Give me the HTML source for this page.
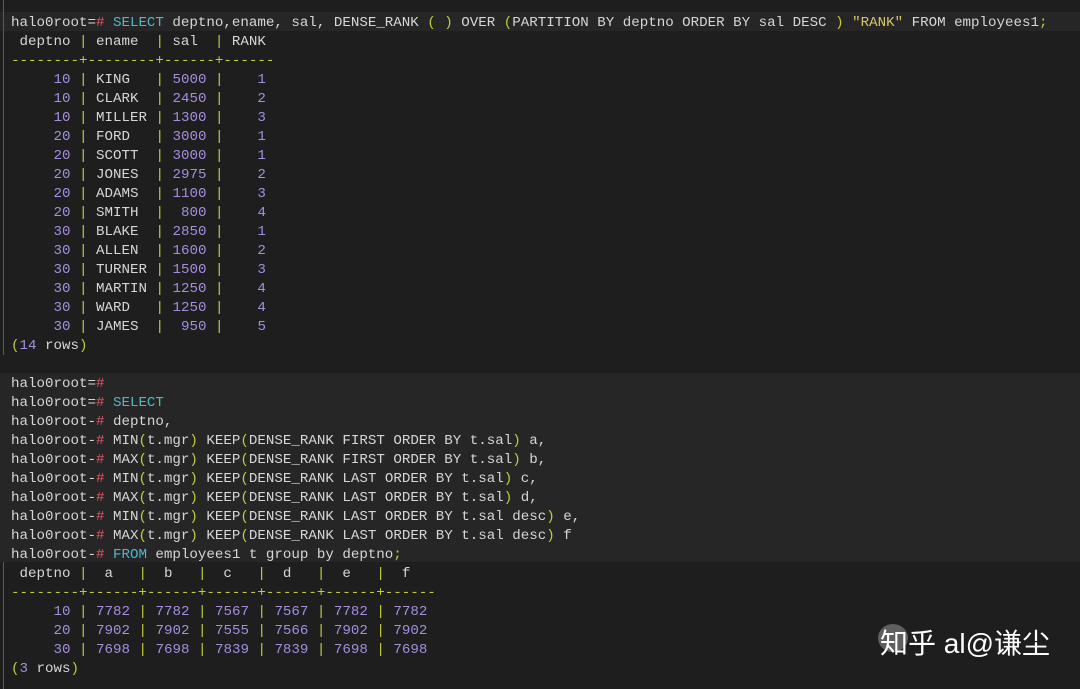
<!DOCTYPE html>
<html><head><meta charset="utf-8"><style>
html,body{margin:0;padding:0;}
body{width:1080px;height:689px;background:#1e1e1e;position:relative;overflow:hidden;}
.band{position:absolute;left:0;width:1080px;background:#262626;}
.vl{position:absolute;left:3px;width:1px;background:#5a5a5a;}
pre{position:absolute;left:11px;top:14px;margin:0;font-family:"Liberation Mono",monospace;font-size:14.17px;line-height:19px;color:#d6d6d6;}
.p{color:#e5535f}.k{color:#4fb8c9}.n{color:#a58ee0}.y{color:#c3cc3a}.s{color:#d8c468}
.wm{position:absolute;left:880px;top:622px;font-family:"Liberation Sans","Noto Sans CJK SC",sans-serif;font-size:28px;color:#fff;letter-spacing:0px;}
.wm i{position:absolute;left:-2px;top:2px;width:30px;height:28px;border-radius:50%;background:#8a8a8a;opacity:.6;z-index:-1}
</style></head><body>
<div class="band" style="top:12px;height:19px"></div>
<div class="band" style="top:373px;height:189px"></div>
<div class="vl" style="top:0;height:355px"></div>
<div class="vl" style="top:562px;height:127px"></div>
<pre>halo0root=<span class="p">#</span> <span class="k">SELECT</span> deptno,ename, sal, DENSE_RANK <span class="y">(</span> <span class="y">)</span> OVER <span class="y">(</span>PARTITION BY deptno ORDER BY sal DESC <span class="y">)</span> <span class="s">"RANK"</span> FROM employees1<span class="y">;</span>
 deptno <span class="y">|</span> ename  <span class="y">|</span> sal  <span class="y">|</span> RANK
<span class="y">--------+--------+------+------</span>
     <span class="n">10</span> <span class="y">|</span> KING   <span class="y">|</span> <span class="n">5000</span> <span class="y">|</span>    <span class="n">1</span>
     <span class="n">10</span> <span class="y">|</span> CLARK  <span class="y">|</span> <span class="n">2450</span> <span class="y">|</span>    <span class="n">2</span>
     <span class="n">10</span> <span class="y">|</span> MILLER <span class="y">|</span> <span class="n">1300</span> <span class="y">|</span>    <span class="n">3</span>
     <span class="n">20</span> <span class="y">|</span> FORD   <span class="y">|</span> <span class="n">3000</span> <span class="y">|</span>    <span class="n">1</span>
     <span class="n">20</span> <span class="y">|</span> SCOTT  <span class="y">|</span> <span class="n">3000</span> <span class="y">|</span>    <span class="n">1</span>
     <span class="n">20</span> <span class="y">|</span> JONES  <span class="y">|</span> <span class="n">2975</span> <span class="y">|</span>    <span class="n">2</span>
     <span class="n">20</span> <span class="y">|</span> ADAMS  <span class="y">|</span> <span class="n">1100</span> <span class="y">|</span>    <span class="n">3</span>
     <span class="n">20</span> <span class="y">|</span> SMITH  <span class="y">|</span>  <span class="n">800</span> <span class="y">|</span>    <span class="n">4</span>
     <span class="n">30</span> <span class="y">|</span> BLAKE  <span class="y">|</span> <span class="n">2850</span> <span class="y">|</span>    <span class="n">1</span>
     <span class="n">30</span> <span class="y">|</span> ALLEN  <span class="y">|</span> <span class="n">1600</span> <span class="y">|</span>    <span class="n">2</span>
     <span class="n">30</span> <span class="y">|</span> TURNER <span class="y">|</span> <span class="n">1500</span> <span class="y">|</span>    <span class="n">3</span>
     <span class="n">30</span> <span class="y">|</span> MARTIN <span class="y">|</span> <span class="n">1250</span> <span class="y">|</span>    <span class="n">4</span>
     <span class="n">30</span> <span class="y">|</span> WARD   <span class="y">|</span> <span class="n">1250</span> <span class="y">|</span>    <span class="n">4</span>
     <span class="n">30</span> <span class="y">|</span> JAMES  <span class="y">|</span>  <span class="n">950</span> <span class="y">|</span>    <span class="n">5</span>
<span class="y">(</span><span class="n">14</span> rows<span class="y">)</span>

halo0root=<span class="p">#</span>
halo0root=<span class="p">#</span> <span class="k">SELECT</span>
halo0root-<span class="p">#</span> deptno,
halo0root-<span class="p">#</span> MIN<span class="y">(</span>t.mgr<span class="y">)</span> KEEP<span class="y">(</span>DENSE_RANK FIRST ORDER BY t.sal<span class="y">)</span> a,
halo0root-<span class="p">#</span> MAX<span class="y">(</span>t.mgr<span class="y">)</span> KEEP<span class="y">(</span>DENSE_RANK FIRST ORDER BY t.sal<span class="y">)</span> b,
halo0root-<span class="p">#</span> MIN<span class="y">(</span>t.mgr<span class="y">)</span> KEEP<span class="y">(</span>DENSE_RANK LAST ORDER BY t.sal<span class="y">)</span> c,
halo0root-<span class="p">#</span> MAX<span class="y">(</span>t.mgr<span class="y">)</span> KEEP<span class="y">(</span>DENSE_RANK LAST ORDER BY t.sal<span class="y">)</span> d,
halo0root-<span class="p">#</span> MIN<span class="y">(</span>t.mgr<span class="y">)</span> KEEP<span class="y">(</span>DENSE_RANK LAST ORDER BY t.sal desc<span class="y">)</span> e,
halo0root-<span class="p">#</span> MAX<span class="y">(</span>t.mgr<span class="y">)</span> KEEP<span class="y">(</span>DENSE_RANK LAST ORDER BY t.sal desc<span class="y">)</span> f
halo0root-<span class="p">#</span> <span class="k">FROM</span> employees1 t group by deptno<span class="y">;</span>
 deptno <span class="y">|</span>  a   <span class="y">|</span>  b   <span class="y">|</span>  c   <span class="y">|</span>  d   <span class="y">|</span>  e   <span class="y">|</span>  f
<span class="y">--------+------+------+------+------+------+------</span>
     <span class="n">10</span> <span class="y">|</span> <span class="n">7782</span> <span class="y">|</span> <span class="n">7782</span> <span class="y">|</span> <span class="n">7567</span> <span class="y">|</span> <span class="n">7567</span> <span class="y">|</span> <span class="n">7782</span> <span class="y">|</span> <span class="n">7782</span>
     <span class="n">20</span> <span class="y">|</span> <span class="n">7902</span> <span class="y">|</span> <span class="n">7902</span> <span class="y">|</span> <span class="n">7555</span> <span class="y">|</span> <span class="n">7566</span> <span class="y">|</span> <span class="n">7902</span> <span class="y">|</span> <span class="n">7902</span>
     <span class="n">30</span> <span class="y">|</span> <span class="n">7698</span> <span class="y">|</span> <span class="n">7698</span> <span class="y">|</span> <span class="n">7839</span> <span class="y">|</span> <span class="n">7839</span> <span class="y">|</span> <span class="n">7698</span> <span class="y">|</span> <span class="n">7698</span>
<span class="y">(</span><span class="n">3</span> rows<span class="y">)</span></pre>
<div class="wm"><i></i>知乎 al@谦尘</div>
</body></html>
